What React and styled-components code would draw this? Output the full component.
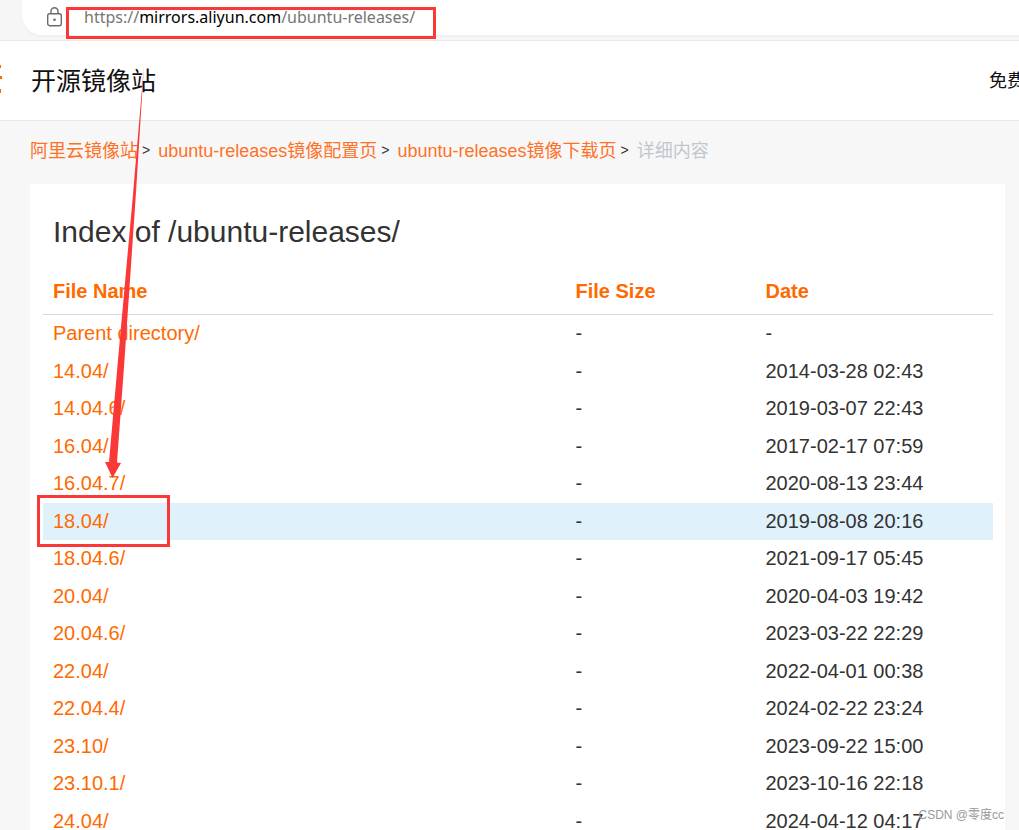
import React from 'react';
import styled, { createGlobalStyle } from 'styled-components';

const red = '#fb3838';
const orange = '#ff6a00';

const GlobalStyle = createGlobalStyle`
  * { box-sizing: border-box; }
  body {
    margin: 0;
    background: #f7f7f7;
    color: #333;
    font-family: "Liberation Sans", "Noto Sans CJK SC", sans-serif;
  }
`;

const Page = styled.div`
  position: relative;
  height: 100vh;
  overflow: hidden;
`;

const BrowserBar = styled.div`
  display: flex;
  height: 41px;
  padding-left: 22px;
  background: #f6f6f6;
  border-bottom: 1px solid #e9e9e9;
`;

const AddressBox = styled.div`
  flex: 1;
  display: flex;
  align-items: center;
  height: 35px;
  padding: 0 0 2px 24px;
  background: #fff;
  border-radius: 0 0 0 20px;
  box-shadow: 0 2px 1px #f0f0f0;
`;

const Address = styled.p`
  margin: 0 0 0 21px;
  font: 16px/24px "Noto Sans", sans-serif;
  color: #767676;
  white-space: nowrap;
`;

const Host = styled.span`
  color: #000;
`;

const SiteHeader = styled.header`
  display: flex;
  align-items: center;
  height: 80px;
  padding-bottom: 4px;
  background: #fff;
  border-bottom: 1px solid #e8e8e8;
  color: #111;
`;

const SiteName = styled.div`
  flex: 1;
  margin-left: 28px;
  font-size: 25px;
  font-weight: 400;
`;

const HeaderLink = styled.a`
  width: 30px;
  color: #111;
  font-size: 18px;
  text-decoration: none;
  white-space: nowrap;
`;

const Breadcrumb = styled.nav`
  display: flex;
  align-items: center;
  height: 63px;
  padding: 0 30px 8px;
  font-size: 18px;
  white-space: nowrap;
`;

const Crumb = styled.a`
  color: #ff7127;
  text-decoration: none;
`;

const Separator = styled.span`
  margin: 0 8px 0 4px;
  padding-top: 2px;
  font-size: 14px;
`;

const CurrentCrumb = styled.span`
  color: #c1c7cf;
`;

const Card = styled.main`
  margin: 0 14px 0 30px;
  padding: 28px 12px 24px 13px;
  background: #fff;
`;

const Title = styled.h1`
  margin: 0 0 16px;
  padding-left: 10px;
  font-size: 30px;
  font-weight: 400;
  line-height: 40px;
`;

const FileTable = styled.table`
  width: 100%;
  table-layout: fixed;
  border-collapse: separate;
  border-spacing: 0;
  font-size: 20px;
  line-height: 24px;
`;

const HeadCell = styled.th`
  width: ${(p) => p.$width};
  height: 47px;
  padding: 0 10px;
  border-bottom: 1px solid #d9d9d9;
  color: ${orange};
  text-align: left;
`;

const Row = styled.tr`
  height: 38px;
  background: ${(p) => (p.$active ? '#dff1fb' : 'transparent')};
  &:nth-child(even) { height: 37px; }
`;

const Cell = styled.td`
  padding: 0 10px 2px;
`;

const FileLink = styled.a`
  color: ${orange};
  text-decoration: none;
`;

const Highlight = styled.div`
  position: absolute;
  left: ${(p) => p.$left}px;
  top: ${(p) => p.$top}px;
  width: ${(p) => p.$width}px;
  height: ${(p) => p.$height}px;
  border: 3px solid ${red};
  pointer-events: none;
`;

const Arrow = styled.svg`
  position: absolute;
  left: 100px;
  top: 60px;
  pointer-events: none;
`;

const Watermark = styled.span`
  position: absolute;
  right: 15px;
  bottom: 6px;
  color: #999;
  font-size: 12px;
  line-height: 18px;
`;

const files = [
  ['Parent directory/', '-'],
  ['14.04/', '2014-03-28 02:43'],
  ['14.04.6/', '2019-03-07 22:43'],
  ['16.04/', '2017-02-17 07:59'],
  ['16.04.7/', '2020-08-13 23:44'],
  ['18.04/', '2019-08-08 20:16'],
  ['18.04.6/', '2021-09-17 05:45'],
  ['20.04/', '2020-04-03 19:42'],
  ['20.04.6/', '2023-03-22 22:29'],
  ['22.04/', '2022-04-01 00:38'],
  ['22.04.4/', '2024-02-22 23:24'],
  ['23.10/', '2023-09-22 15:00'],
  ['23.10.1/', '2023-10-16 22:18'],
  ['24.04/', '2024-04-12 04:17'],
];

const LockIcon = () => (
  <svg width="17" height="20" viewBox="0 0 17 20" fill="none" stroke="#6b6b6b" strokeWidth="1.4" aria-hidden="true">
    <rect x="1.7" y="6.7" width="13.6" height="12" rx="2" />
    <path d="M5 6.7V4.2a3.5 3.5 0 0 1 7 0v2.5" />
    <circle cx="8.5" cy="12.7" r="1.3" fill="#6b6b6b" stroke="none" />
  </svg>
);

const LogoEdge = () => (
  <svg width="3" height="30" viewBox="0 0 3 30" fill={orange} aria-hidden="true">
    <path d="M0 1h1v3H0zM0 12h2v3H0zM0 25h1v4H0z" />
  </svg>
);

export default function App() {
  return (
    <Page>
      <GlobalStyle />
      <BrowserBar>
        <AddressBox>
          <LockIcon />
          <Address>
            https://<Host>mirrors.aliyun.com</Host>/ubuntu-releases/
          </Address>
        </AddressBox>
      </BrowserBar>
      <SiteHeader>
        <LogoEdge />
        <SiteName>开源镜像站</SiteName>
        <HeaderLink href="#free">免费</HeaderLink>
      </SiteHeader>
      <Breadcrumb>
        <Crumb href="#home">阿里云镜像站</Crumb>
        <Separator>&gt;</Separator>
        <Crumb href="#config">ubuntu-releases镜像配置页</Crumb>
        <Separator>&gt;</Separator>
        <Crumb href="#download">ubuntu-releases镜像下载页</Crumb>
        <Separator>&gt;</Separator>
        <CurrentCrumb>详细内容</CurrentCrumb>
      </Breadcrumb>
      <Card>
        <Title>Index of /ubuntu-releases/</Title>
        <FileTable>
          <thead>
            <tr>
              <HeadCell $width="55%">File Name</HeadCell>
              <HeadCell $width="20%">File Size</HeadCell>
              <HeadCell $width="25%">Date</HeadCell>
            </tr>
          </thead>
          <tbody>
            {files.map(([name, date]) => (
              <Row key={name} $active={name === '18.04/'}>
                <Cell><FileLink href={`#${name}`}>{name}</FileLink></Cell>
                <Cell>-</Cell>
                <Cell>{date}</Cell>
              </Row>
            ))}
          </tbody>
        </FileTable>
      </Card>
      <Highlight $left={66} $top={7} $width={370} $height={32} />
      <Highlight $left={37} $top={495} $width={133} $height={52} />
      <Arrow width="60" height="420" viewBox="0 0 60 420" fill={red} aria-hidden="true">
        <path d="M44 5L35.5 140L24.5 300L17 402.5L21 403L12.5 418L5 402L9 402L18 300L32.5 140Z" />
      </Arrow>
      <Watermark>CSDN @零度cc</Watermark>
    </Page>
  );
}
